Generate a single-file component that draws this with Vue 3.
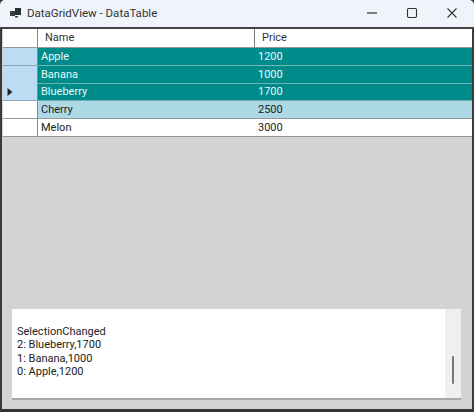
<template>
  <div class="window">
    <!-- title bar -->
    <div class="titlebar">
      <svg class="app-icon" width="12" height="10" viewBox="0 0 12 10">
        <rect x="0" y="3" width="5" height="5" fill="#3a3f44" />
        <rect x="5" y="0" width="6" height="7" fill="#2b3035" />
        <rect x="5" y="8" width="3" height="1.5" fill="#3a3f44" />
      </svg>
      <span class="title">DataGridView - DataTable</span>
      <div class="controls">
        <svg class="ctrl" width="40" height="28" viewBox="0 0 40 28">
          <path d="M15 14h10" stroke="#333" stroke-width="1.2" />
        </svg>
        <svg class="ctrl" width="40" height="28" viewBox="0 0 40 28">
          <rect x="15.5" y="9.5" width="9" height="9" rx="1.2" fill="none" stroke="#333" stroke-width="1.1" />
        </svg>
        <svg class="ctrl" width="40" height="28" viewBox="0 0 40 28">
          <path d="M15.5 9.5l9 9M24.5 9.5l-9 9" stroke="#333" stroke-width="1.1" />
        </svg>
      </div>
    </div>

    <div class="client">
      <!-- grid -->
      <div class="grid">
        <div class="row head">
          <div class="rowhead"></div>
          <div class="cell name">Name</div>
          <div class="cell price">Price</div>
        </div>
        <div v-for="r in rows" :key="r.name" class="row" :class="r.state">
          <div class="rowhead">
            <svg v-if="r.current" width="6" height="8" viewBox="0 0 6 8">
              <path d="M0.5 0L5.5 4L0.5 8Z" fill="#222" />
            </svg>
          </div>
          <div class="cell name">{{ r.name }}</div>
          <div class="cell price">{{ r.price }}</div>
        </div>
      </div>

      <!-- log -->
      <div class="log">
        <div class="log-text">{{ log }}</div>
        <div class="scrollbar">
          <div class="thumb"></div>
        </div>
      </div>
    </div>
  </div>
</template>

<script setup>
const rows = [
  { name: 'Apple', price: 1200, state: 'selected' },
  { name: 'Banana', price: 1000, state: 'selected' },
  { name: 'Blueberry', price: 1700, state: 'selected', current: true },
  { name: 'Cherry', price: 2500, state: 'alt' },
  { name: 'Melon', price: 3000, state: 'plain' }
]

const log = 'SelectionChanged\n2: Blueberry,1700\n1: Banana,1000\n0: Apple,1200'
</script>

<style>
html,
body {
  margin: 0;
  background: #2f3a35;
}
</style>

<style scoped>
.window {
  width: 474px;
  height: 412px;
  box-sizing: border-box;
  display: flex;
  flex-direction: column;
  background: #d3d3d3;
  border-left: 2px solid #3a3a3a;
  border-right: 2px solid #3a3a3a;
  border-bottom: 3px solid #333;
  border-radius: 5px 5px 0 0;
  font-family: Roboto, "Open Sans", sans-serif;
  font-size: 11px;
  color: #222;
}

.titlebar {
  height: 27px;
  margin: 0 -2px;
  flex-shrink: 0;
  display: flex;
  align-items: center;
  padding-left: 10px;
  background: #eef4f9;
  border-bottom: 2px solid #444;
  border-radius: 5px 5px 0 0;
}

.app-icon {
  margin-right: 5px;
  margin-top: -2px;
}

.title {
  font-size: 11.5px;
  color: #333;
  margin-top: -1px;
}

.controls {
  margin-left: auto;
  display: flex;
  margin-right: 2px;
  margin-top: -1px;
}

.ctrl {
  display: block;
}

.client {
  flex: 1;
  display: flex;
  flex-direction: column;
  justify-content: space-between;
}

.grid {
  background: #fff;
  margin-left: 1px;
}

.row {
  display: grid;
  grid-template-columns: 35px 217px 1fr;
  height: 17.7px;
}

.rowhead,
.cell {
  box-sizing: border-box;
  border-bottom: 1px solid #8d9a9c;
}

.rowhead {
  display: flex;
  align-items: center;
  padding-left: 4px;
  border-right: 1px solid #8a8a8a;
}

.cell {
  padding-left: 3px;
  line-height: 17px;
  white-space: nowrap;
}

.head {
  height: 19px;
}

.head .cell {
  padding-left: 7px;
  color: #333;
}

.head .name {
  border-right: 1px solid #777;
}

.selected {
  background: #008b8b;
  color: #e6fbfa;
}

.selected .cell {
  border-bottom-color: #6fb3b5;
}

.selected .rowhead {
  background: #bcdcf3;
  border-bottom-color: #8fa5b5;
}

.alt {
  background: #add8e6;
}

.alt .rowhead,
.plain .rowhead {
  background: #fff;
}

.plain {
  background: #fff;
}

.log {
  margin: 0 11px 9px 10px;
  height: 91px;
  display: flex;
  background: #fff;
  box-sizing: border-box;
  border-bottom: 2px solid #a8a8a8;
}

.log-text {
  flex: 1;
  padding: 16px 0 0 5px;
  line-height: 13.3px;
  white-space: pre-line;
}

.scrollbar {
  width: 16px;
  background: #efefef;
  display: flex;
  flex-direction: column;
  align-items: center;
  justify-content: flex-end;
  padding-bottom: 14px;
  box-sizing: border-box;
}

.thumb {
  width: 2px;
  height: 28px;
  background: #777;
  border-radius: 1px;
}
</style>
